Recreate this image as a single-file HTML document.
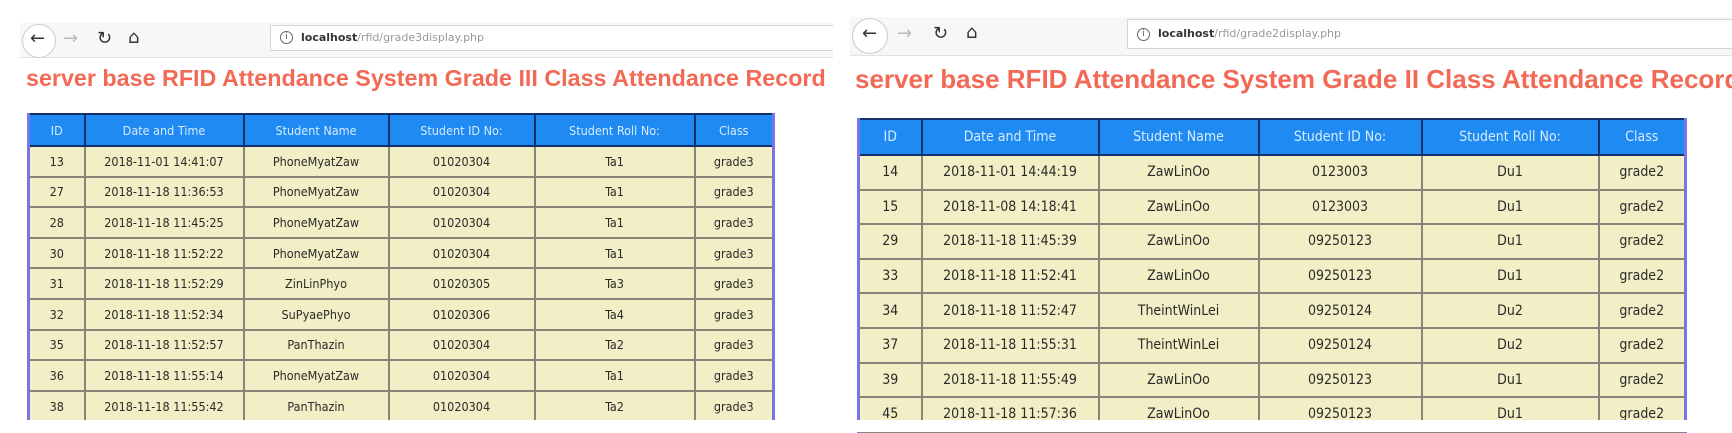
<!DOCTYPE html>
<html><head><meta charset="utf-8"><style>
body{margin:0;width:1732px;height:432px;background:#fff;position:relative;overflow:hidden;font-family:"DejaVu Sans","Liberation Sans",sans-serif}
.tb{position:absolute;background:#f7f7f8;border-bottom:1px solid #e2e2e2}
.addr{position:absolute;background:#fff;border:1px solid #d4d4d4;border-right:none;font-size:11px;color:#999;line-height:24px;box-sizing:border-box;padding-left:30px}
.addr b{color:#333;font-weight:bold}
.addr i{position:absolute;left:9px;top:5px;width:11px;height:11px;border:1px solid #666;border-radius:50%;font-style:normal;font-size:9px;line-height:11px;text-align:center;color:#555}
.ic{position:absolute;color:#333;font-size:18px;line-height:1}
.circ{position:absolute;border:1px solid #ccc;border-radius:50%;background:#fff}
.title{position:absolute;color:#f26a55;font-family:"Liberation Sans",sans-serif;font-weight:bold;white-space:nowrap}
table{position:absolute;border-collapse:collapse;table-layout:fixed;font-family:"DejaVu Sans Condensed","DejaVu Sans",sans-serif}
td,th{border:2px solid #8a8578;text-align:center;padding:0;white-space:nowrap;overflow:hidden}
th{background:#1e8af2;color:#d6ebff;font-weight:normal;border-color:#14306a}
td{background:#f2eec5;color:#2a2a2a}
table.l{left:27px;top:113px;width:745px;font-size:12.5px;border-left:3px solid #7a74e6;border-right:3px solid #7a74e6}
table.l th{height:30px}
table.l td{height:28.6px}
table.r{left:857px;top:118px;width:827px;font-size:14px;border-left:3px solid #7a74e6;border-right:3px solid #7a74e6}
table.r th{height:34px}
table.r td{height:32.6px}
</style></head><body>
<div class="tb" style="left:20px;top:23px;width:813px;height:34px"></div>
<div class="circ" style="left:22px;top:24px;width:32px;height:32px"></div>
<div class="ic" style="left:30px;top:30px">&#8592;</div>
<div class="ic" style="left:63px;top:30px;color:#bbb">&#8594;</div>
<div class="ic" style="left:97px;top:30px">&#8635;</div>
<div class="ic" style="left:128px;top:29px">&#8962;</div>
<div class="addr" style="left:270px;top:25px;width:563px;height:26px"><i>i</i><b>localhost</b>/rfid/grade3display.php</div>
<div class="title" style="left:26px;top:65px;font-size:23.3px">server base RFID Attendance System Grade III Class Attendance Record</div>

<div class="tb" style="left:850px;top:17px;width:882px;height:38px"></div>
<div class="circ" style="left:852px;top:18px;width:34px;height:34px"></div>
<div class="ic" style="left:862px;top:25px">&#8592;</div>
<div class="ic" style="left:897px;top:25px;color:#bbb">&#8594;</div>
<div class="ic" style="left:933px;top:25px">&#8635;</div>
<div class="ic" style="left:966px;top:24px">&#8962;</div>
<div class="addr" style="left:1127px;top:19px;width:605px;height:30px;line-height:28px"><i style="top:8px">i</i><b>localhost</b>/rfid/grade2display.php</div>
<div class="title" style="left:855px;top:64px;font-size:26px">server base RFID Attendance System Grade II Class Attendance Record</div>

<table class="l">
<colgroup><col style="width:56px"><col style="width:159px"><col style="width:145px"><col style="width:146px"><col style="width:160px"><col style="width:79px"></colgroup>
<tr><th>ID</th><th>Date and Time</th><th>Student Name</th><th>Student ID No:</th><th>Student Roll No:</th><th>Class</th></tr>
<tr><td>13</td><td>2018-11-01 14:41:07</td><td>PhoneMyatZaw</td><td>01020304</td><td>Ta1</td><td>grade3</td></tr>
<tr><td>27</td><td>2018-11-18 11:36:53</td><td>PhoneMyatZaw</td><td>01020304</td><td>Ta1</td><td>grade3</td></tr>
<tr><td>28</td><td>2018-11-18 11:45:25</td><td>PhoneMyatZaw</td><td>01020304</td><td>Ta1</td><td>grade3</td></tr>
<tr><td>30</td><td>2018-11-18 11:52:22</td><td>PhoneMyatZaw</td><td>01020304</td><td>Ta1</td><td>grade3</td></tr>
<tr><td>31</td><td>2018-11-18 11:52:29</td><td>ZinLinPhyo</td><td>01020305</td><td>Ta3</td><td>grade3</td></tr>
<tr><td>32</td><td>2018-11-18 11:52:34</td><td>SuPyaePhyo</td><td>01020306</td><td>Ta4</td><td>grade3</td></tr>
<tr><td>35</td><td>2018-11-18 11:52:57</td><td>PanThazin</td><td>01020304</td><td>Ta2</td><td>grade3</td></tr>
<tr><td>36</td><td>2018-11-18 11:55:14</td><td>PhoneMyatZaw</td><td>01020304</td><td>Ta1</td><td>grade3</td></tr>
<tr><td>38</td><td>2018-11-18 11:55:42</td><td>PanThazin</td><td>01020304</td><td>Ta2</td><td>grade3</td></tr>
</table>

<table class="r">
<colgroup><col style="width:63px"><col style="width:177px"><col style="width:160px"><col style="width:163px"><col style="width:177px"><col style="width:87px"></colgroup>
<tr><th>ID</th><th>Date and Time</th><th>Student Name</th><th>Student ID No:</th><th>Student Roll No:</th><th>Class</th></tr>
<tr><td>14</td><td>2018-11-01 14:44:19</td><td>ZawLinOo</td><td>0123003</td><td>Du1</td><td>grade2</td></tr>
<tr><td>15</td><td>2018-11-08 14:18:41</td><td>ZawLinOo</td><td>0123003</td><td>Du1</td><td>grade2</td></tr>
<tr><td>29</td><td>2018-11-18 11:45:39</td><td>ZawLinOo</td><td>09250123</td><td>Du1</td><td>grade2</td></tr>
<tr><td>33</td><td>2018-11-18 11:52:41</td><td>ZawLinOo</td><td>09250123</td><td>Du1</td><td>grade2</td></tr>
<tr><td>34</td><td>2018-11-18 11:52:47</td><td>TheintWinLei</td><td>09250124</td><td>Du2</td><td>grade2</td></tr>
<tr><td>37</td><td>2018-11-18 11:55:31</td><td>TheintWinLei</td><td>09250124</td><td>Du2</td><td>grade2</td></tr>
<tr><td>39</td><td>2018-11-18 11:55:49</td><td>ZawLinOo</td><td>09250123</td><td>Du1</td><td>grade2</td></tr>
<tr><td>45</td><td>2018-11-18 11:57:36</td><td>ZawLinOo</td><td>09250123</td><td>Du1</td><td>grade2</td></tr>
</table>
<div style="position:absolute;left:0;top:420px;width:1732px;height:12px;background:#fff"></div>
</body></html>
